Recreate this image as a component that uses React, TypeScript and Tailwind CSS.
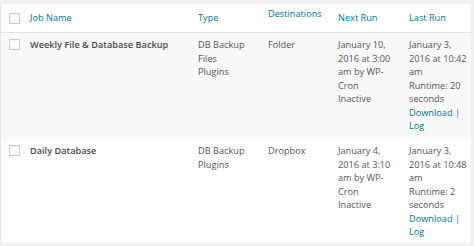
const jobs = [
  {
    id: 1,
    name: 'Weekly File & Database Backup',
    type: ['DB Backup', 'Files', 'Plugins'],
    dest: 'Folder',
    next: 'January 10, 2016 at 3:00 am by WP-Cron',
    last: 'January 3, 2016 at 10:42 am',
    runtime: 'Runtime: 20 seconds',
    bg: 'bg-[#f9f9f9]',
  },
  {
    id: 2,
    name: 'Daily Database',
    type: ['DB Backup', 'Plugins'],
    dest: 'Dropbox',
    next: 'January 4, 2016 at 3:10 am by WP-Cron',
    last: 'January 3, 2016 at 10:48 am',
    runtime: 'Runtime: 2 seconds',
    bg: 'bg-white',
  },
];

function Checkbox() {
  return <span className="block h-[11px] w-[11px] border border-[#c8cbce] bg-white shadow-[inset_0_1px_2px_rgba(0,0,0,0.07)]" />;
}

const cols = 'grid grid-cols-[29px_168px_70px_70px_71px_1fr]';

export default function App() {
  return (
    <div
      className="h-[246px] w-[474px] bg-[#f1f1f1] pt-[4px] pr-[3px] text-[9.2px] leading-[13.5px] text-[#555]"
      style={{ fontFamily: '"Open Sans", "Liberation Sans", sans-serif' }}
    >
      <div className="border-l border-[#e5e5e5] bg-white">
        {/* Header */}
        <div className={`${cols} h-[29px] items-center border-b border-[#e1e1e1] text-[#0073aa]`}>
          <div className="pl-[8px]">
            <Checkbox />
          </div>
          <div>Job Name</div>
          <div>Type</div>
          <div className="-mt-[8px]">Destinations</div>
          <div>Next Run</div>
          <div>Last Run</div>
        </div>

        {/* Rows */}
        {jobs.map((job) => (
          <div key={job.id} className={`${cols} ${job.bg} ${job.id === 1 ? 'h-[106px]' : 'h-[104px]'} pt-[5px]`}>
            <div className="pl-[8px] pt-[1px]">
              <Checkbox />
            </div>
            <div className="font-semibold text-[#4a4a4a]">{job.name}</div>
            <div>
              {job.type.map((t) => (
                <div key={t}>{t}</div>
              ))}
            </div>
            <div>{job.dest}</div>
            <div className="pr-[10px]">
              {job.next}
              <div>Inactive</div>
            </div>
            <div>
              {job.last}
              <div>{job.runtime}</div>
              <div className="text-[#0073aa]">Download | Log</div>
            </div>
          </div>
        ))}
      </div>
    </div>
  );
}
